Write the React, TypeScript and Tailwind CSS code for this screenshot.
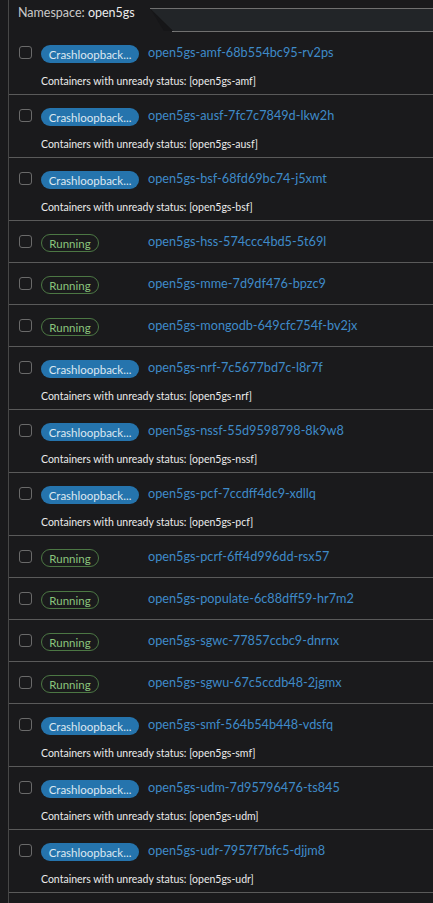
import React from 'react';

type Pod = { name: string; status: 'crash' | 'running'; container?: string };

const pods: Pod[] = [
  { name: 'open5gs-amf-68b554bc95-rv2ps', status: 'crash', container: 'open5gs-amf' },
  { name: 'open5gs-ausf-7fc7c7849d-lkw2h', status: 'crash', container: 'open5gs-ausf' },
  { name: 'open5gs-bsf-68fd69bc74-j5xmt', status: 'crash', container: 'open5gs-bsf' },
  { name: 'open5gs-hss-574ccc4bd5-5t69l', status: 'running' },
  { name: 'open5gs-mme-7d9df476-bpzc9', status: 'running' },
  { name: 'open5gs-mongodb-649cfc754f-bv2jx', status: 'running' },
  { name: 'open5gs-nrf-7c5677bd7c-l8r7f', status: 'crash', container: 'open5gs-nrf' },
  { name: 'open5gs-nssf-55d9598798-8k9w8', status: 'crash', container: 'open5gs-nssf' },
  { name: 'open5gs-pcf-7ccdff4dc9-xdllq', status: 'crash', container: 'open5gs-pcf' },
  { name: 'open5gs-pcrf-6ff4d996dd-rsx57', status: 'running' },
  { name: 'open5gs-populate-6c88dff59-hr7m2', status: 'running' },
  { name: 'open5gs-sgwc-77857ccbc9-dnrnx', status: 'running' },
  { name: 'open5gs-sgwu-67c5ccdb48-2jgmx', status: 'running' },
  { name: 'open5gs-smf-564b54b448-vdsfq', status: 'crash', container: 'open5gs-smf' },
  { name: 'open5gs-udm-7d95796476-ts845', status: 'crash', container: 'open5gs-udm' },
  { name: 'open5gs-udr-7957f7bfc5-djjm8', status: 'crash', container: 'open5gs-udr' },
];

function Badge({ status }: { status: Pod['status'] }) {
  if (status === 'crash') {
    return (
      <span className="inline-flex h-[18px] w-[98px] items-center justify-center rounded-full bg-[#2574ad] text-[11.5px] leading-none text-[#dde8f1]">
        Crashloopback...
      </span>
    );
  }
  return (
    <span className="inline-flex h-[18px] w-[58px] items-center justify-center rounded-full border border-[#4c7744] text-[11.5px] leading-none text-[#8ac47c]">
      Running
    </span>
  );
}

function Row({ pod }: { pod: Pod }) {
  return (
    <div className="border-b border-[#5a5a5a]">
      <div className="flex h-[41px] items-center">
        <span className="ml-[10px] mr-[9px] h-[13px] w-[13px] rounded-[3px] border border-[#6a6a6a]" />
        <div className="w-[107px]">
          <Badge status={pod.status} />
        </div>
        <span className="text-[12.7px] text-[#3f8bc9]">{pod.name}</span>
      </div>
      {pod.container && (
        <div className="h-[21px] pl-[32px] pt-[1px] text-[10.5px] leading-[14px] text-[#ebebeb]">
          Containers with unready status: [{pod.container}]
        </div>
      )}
    </div>
  );
}

export default function App() {
  return (
    <main className="min-h-screen bg-[#1a1a1c] pl-[8px]" style={{ fontFamily: 'Lato, "Noto Sans", sans-serif' }}>
      <div className="min-h-screen border-l border-[#474747]">
        <header className="flex h-[32px]">
          <div className="w-[141px] pl-[9px] pt-[5px] text-[12.5px] leading-[16px] text-[#c9c9c9]">
            Namespace: <span className="text-[#ececec]">open5gs</span>
          </div>
          <svg width="24" height="32" viewBox="0 0 24 32" className="shrink-0">
            <polygon points="0,8.5 24,8.5 24,31 23,31" fill="#222528" />
            <polygon points="0,8.5 23,31 14,31" fill="#161618" />
            <line x1="0" y1="8.5" x2="24" y2="8.5" stroke="#6f6f6f" strokeWidth="1" />
            <line x1="22" y1="31.5" x2="24" y2="31.5" stroke="#7a7a7a" strokeWidth="1" />
          </svg>
          <div className="mt-[8px] h-[24px] flex-1 border-y border-[#707070] bg-[#222528]" />
        </header>
        {pods.map(p => (
          <Row key={p.name} pod={p} />
        ))}
      </div>
    </main>
  );
}
